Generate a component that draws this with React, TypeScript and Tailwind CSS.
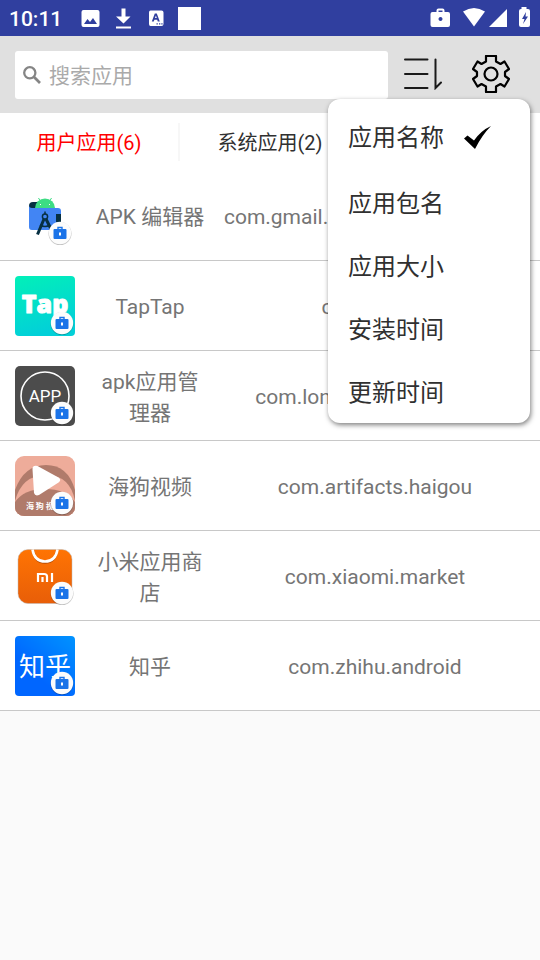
import type { ReactNode } from "react";

type AppInfo = {
  name: string;
  pkg: string;
  icon: ReactNode;
};

const tabs = ["用户应用(6)", "系统应用(2)"];

const sortOptions = ["应用名称", "应用包名", "应用大小", "安装时间", "更新时间"];

function WorkBadge({ cx = 47, cy = 47 }: { cx?: number; cy?: number }) {
  return (
    <g transform={`translate(${cx} ${cy})`}>
      <circle r="11.5" cy="0.6" fill="#000" opacity="0.25" />
      <circle r="11.2" fill="#fcfcfc" />
      <path d="M-2 -3.5v-2h4v2" fill="none" stroke="#1a73e8" strokeWidth="1.4" />
      <rect x="-6.5" y="-4" width="13" height="10" rx="1" fill="#1a73e8" />
      <path d="M-1 -0.5h2v3h-2z" fill="#fff" />
    </g>
  );
}

function IconFrame({ children, cx }: { children: ReactNode; cx?: number }) {
  return (
    <svg viewBox="0 0 60 60" className="size-15 overflow-visible" aria-hidden="true">
      {children}
      <WorkBadge cx={cx} />
    </svg>
  );
}

const apps: AppInfo[] = [
  {
    name: "APK 编辑器",
    pkg: "com.gmail.heagoo.apkeditor.pro",
    icon: (
      <IconFrame cx={45}>
        <path d="M14 23v-3q0-4 4-4h8v6z" fill="#073042" />
        <path d="M20 22a10 9.5 0 0 1 20 0z" fill="#3ddc84" />
        <path d="M25 14.5l-1.5-2.5M35 14.5l1.5-2.5" stroke="#3ddc84" strokeWidth="1" />
        <path d="M25 18h1v1h-1zM34 18h1v1h-1z" fill="#fff" />
        <path d="M14 19q0 3 3 3h26q3 0 3 3v16q0 3-3 3H17q-3 0-3-3z" fill="#4285f4" />
        <path d="M41 28h5v8h-5z" fill="#073042" />
        <path d="M29 33l-6.5 15.500M31 33l6 12" fill="none" stroke="#073042" strokeWidth="3" />
        <path d="M30 25.500v3M25 39q5 3 10 0" fill="none" stroke="#073042" strokeWidth="1.500" />
        <circle cx="30" cy="30.500" r="2.600" fill="#4285f4" stroke="#073042" strokeWidth="1.500" />
      </IconFrame>
    ),
  },
  {
    name: "TapTap",
    pkg: "com.taptap",
    icon: (
      <IconFrame>
        <defs>
          <linearGradient id="tap" x1="0" y1="0" x2="0.3" y2="1">
            <stop offset="0" stopColor="#02f0b8" />
            <stop offset="1" stopColor="#02d0d8" />
          </linearGradient>
        </defs>
        <rect width="60" height="60" rx="4" fill="url(#tap)" />
        <text
          x="30"
          y="37"
          textAnchor="middle"
          fill="#fff"
          stroke="#fff"
          strokeWidth="1"
          strokeLinejoin="round"
          className="font-['Open_Sans',sans-serif] text-[25px] font-extrabold"
        >
          Tap
        </text>
      </IconFrame>
    ),
  },
  {
    name: "apk应用管理器",
    pkg: "com.longan.app.manager",
    icon: (
      <IconFrame>
        <rect width="60" height="60" rx="5" fill="#4c4c4c" />
        <circle cx="30" cy="30" r="24" fill="none" stroke="#fff" strokeWidth="1.600" />
        <text x="30" y="36" textAnchor="middle" fill="#fff" className="font-['Roboto',sans-serif] text-[17px]">
          APP
        </text>
      </IconFrame>
    ),
  },
  {
    name: "海狗视频",
    pkg: "com.artifacts.haigou",
    icon: (
      <IconFrame>
        <defs>
          <clipPath id="seal">
            <rect width="60" height="60" rx="9" />
          </clipPath>
        </defs>
        <g clipPath="url(#seal)">
          <rect width="60" height="60" fill="#eeac9a" />
          <path d="M0 34Q9 9 31 9T60 34V60H0z" fill="#b07b6b" />
          <path d="M0 45Q7 19 31 19T60 45V60H0z" fill="#eeac9a" />
          <path d="M0 60V46Q9 33 30 33t30 13v14z" fill="#b07b6b" />
          <path d="M17.500 13q0-4 5-3l21 11.500q3.500 2.500 0 5L24 39q-4 1.500-5-2z" fill="#fff" />
          <text x="11" y="53" fill="#fff" className="font-['Noto_Sans_CJK_SC',sans-serif] text-[8px] font-bold">
            海 狗 视
          </text>
        </g>
      </IconFrame>
    ),
  },
  {
    name: "小米应用商店",
    pkg: "com.xiaomi.market",
    icon: (
      <IconFrame>
        <defs>
          <linearGradient id="mi" x1="0" y1="0" x2="0" y2="1">
            <stop offset="0" stopColor="#ff7403" />
            <stop offset="1" stopColor="#e85e08" />
          </linearGradient>
        </defs>
        <rect x="3" y="3.500" width="54" height="54" rx="10" fill="url(#mi)" stroke="#bbb" strokeWidth="0.500" />
        <path d="M18 4.500q2 12 12 12t12-12" fill="none" stroke="#b34c08" strokeWidth="2.500" />
        <path d="M17.500 3.500q2 12 12.500 12t12.500-12" fill="none" stroke="#fff" strokeWidth="2.600" />
        <path d="M23 36v-8h6q3 0 3 2.500V36M27.500 31v5M37 27v9" fill="none" stroke="#fff" strokeWidth="2.200" />
      </IconFrame>
    ),
  },
  {
    name: "知乎",
    pkg: "com.zhihu.android",
    icon: (
      <IconFrame>
        <defs>
          <linearGradient id="zhihu" x1="1" y1="0" x2="0.4" y2="0.7">
            <stop offset="0" stopColor="#0093ff" />
            <stop offset="1" stopColor="#0066ff" />
          </linearGradient>
        </defs>
        <rect width="60" height="60" rx="4" fill="url(#zhihu)" />
        <text
          x="30"
          y="40"
          textAnchor="middle"
          fill="#fff"
          className="font-['Noto_Sans_CJK_SC',sans-serif] text-[26px]"
        >
          知乎
        </text>
      </IconFrame>
    ),
  },
];

function StatusBar() {
  return (
    <div className="flex h-9 items-center bg-[#303f9f] pl-[9px] pr-[10px] text-white">
      <span className="pt-[3px] text-[21px] font-medium">10:11</span>
      <svg viewBox="0 0 122 24" className="ml-[18px] h-6 w-[122px]" fill="currentColor" aria-hidden="true">
        <path
          fillRule="evenodd"
          d="M3.500 4h14q2 0 2 2v13q0 2-2 2h-14q-2 0-2-2V6q0-2 2-2zM4 18h13l-4-6-3 4-2.500-3z"
        />
        <path d="M41.500 2.500h4v8h5L43.500 17.500 36 10.500h5.500zM36 20.500h15v2H36z" />
        <path
          fillRule="evenodd"
          d="M70.500 4.500h11q2 0 2 2v11.500q0 2-2 2h-11q-1.500 0-1.500-2V6.500q0-2 1.500-2zM74.800 7.500l-3 8h2l.6-1.800h2.800l.6 1.800h2l-3-8zM75 12l.9-2.600.9 2.600zM76.500 17.200v1.300h1.300v-1.300zM79 17.200v1.300h1.300v-1.300zM81.300 17.200v1.300h1.300v-1.300z"
        />
        <path d="M98 1h23v23H98z" />
      </svg>
      <svg viewBox="0 0 100 24" className="ml-auto h-6 w-[100px]" fill="currentColor" aria-hidden="true">
        <path
          fillRule="evenodd"
          d="M6.500 6V4.500q0-2 2-2h4q2 0 2 2V6H18q2 0 2 2v11q0 2-2 2H2.500q-2 0-2-2V8q0-2 2-2zM8.500 6h4V4.500h-4zM10.500 11a2 2 0 1 0 0.010 0z"
        />
        <path d="M33 5.500Q44 -1.500 55 5.500L44 20.500z" />
        <path d="M77 3v18H59z" />
        <path fillRule="evenodd" d="M91.500 3V1h5v2H98q2 0 2 2v14q0 2-2 2h-7q-2 0-2-2V5q0-2 2-2zM96 6l-4 7h2.500L93 18l5-7.500h-2.500z" />
      </svg>
    </div>
  );
}

function SortMenu() {
  return (
    <div
      role="menu"
      className="absolute right-[10px] top-full z-10 -mt-[14px] flex w-[202px] flex-col rounded-xl bg-white shadow-[1px_2px_5px_rgba(0,0,0,0.5)]"
    >
      {sortOptions.map((option, i) => (
        <button
          key={option}
          role="menuitemradio"
          aria-checked={i === 0}
          className="flex h-[63px] items-center gap-5 pl-5 pt-[2px] text-2xl text-[#303030] first:h-[72px] first:pt-[6px]"
        >
          {option}
          {i === 0 && (
            <svg viewBox="0 0 28 24" className="h-6 w-7" aria-hidden="true">
              <path d="M0 12.500l3.500-3 6.500 5Q17 4.500 27 0q-9 9-16 23z" fill="#000" />
            </svg>
          )}
        </button>
      ))}
    </div>
  );
}

function Header() {
  return (
    <header className="relative flex items-center bg-[#e0e0e0] pb-[14px] pl-[15px] pr-[30px] pt-[15px]">
      <label className="flex h-12 flex-1 items-center rounded-[3px] bg-white pl-2">
        <svg viewBox="0 0 18 18" className="size-[18px]" fill="none" stroke="#858585" aria-hidden="true">
          <circle cx="6.800" cy="6.800" r="5.600" strokeWidth="2.300" />
          <path d="M10.800 10.800l6.200 6.200" strokeWidth="2.700" />
        </svg>
        <input
          type="text"
          aria-label="搜索应用"
          placeholder="搜索应用"
          className="ml-2 min-w-0 flex-1 pt-1 text-[21px] outline-none placeholder:text-[#aaa]"
        />
      </label>
      <button aria-label="排序" className="mb-[2px] ml-4">
        <svg viewBox="0 0 38 32" className="h-8 w-[38px]" fill="none" stroke="#1a1a1a" strokeWidth="2" strokeLinecap="round" aria-hidden="true">
          <path d="M1 1.500h22.500M1 16h22.500M1 30h22.500M31.500 1.500V30l5.500-5.500" />
        </svg>
      </button>
      <button aria-label="设置" className="mb-[2px] ml-[30px]">
        <svg viewBox="0 0 38 38" className="size-[38px]" fill="none" stroke="#000" strokeWidth="2.200" strokeLinejoin="round" aria-hidden="true">
          <path d="M14 1h10v5.500l4.500 2.500 4-2.500L37 14l-4 3v4l4 3-4.500 7.500-4-2.500-4.500 2.500V37H14v-5.500L9.500 29l-4 2.500L1 24l4-3v-4l-4-3 4.500-7.500 4 2.500L14 6.500z" />
          <circle cx="19" cy="19" r="6.500" />
        </svg>
      </button>
      <SortMenu />
    </header>
  );
}

export default function App() {
  return (
    <div className="min-h-screen bg-[#fafafa] font-['Roboto','Noto_Sans_CJK_SC',sans-serif]">
      <StatusBar />
      <Header />
      <nav className="grid h-[58px] grid-cols-3 divide-x-2 divide-[#f7f7f7] bg-white py-[10px]">
        {tabs.map((tab, i) => (
          <button key={tab} className={`pt-[2px] text-xl ${i === 0 ? "text-[#ff0000]" : "text-[#303030]"}`}>
            {tab}
          </button>
        ))}
      </nav>
      <ul>
        {apps.map((app) => (
          <li
            key={app.pkg}
            className="flex h-[90px] items-center border-b border-[#c8c8c8] bg-white text-[21px] leading-[31px] text-[#757575]"
          >
            <div className="w-[90px] shrink-0 pl-[15px]">{app.icon}</div>
            <div className="w-[120px] shrink-0 px-1 pt-1 text-center">{app.name}</div>
            <div className="min-w-0 flex-1 pt-1 text-center">{app.pkg}</div>
          </li>
        ))}
      </ul>
    </div>
  );
}
